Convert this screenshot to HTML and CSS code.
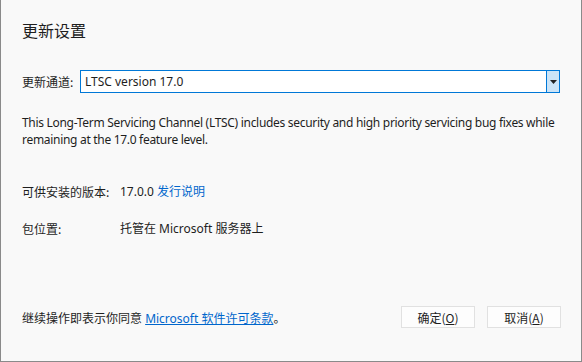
FILE: index.html
```html
<!DOCTYPE html>
<html lang="zh-CN">
<head>
<meta charset="utf-8">
<link rel="stylesheet" href="styles.css">
</head>
<body>
<div class="dialog">
  <h1 class="title">更新设置</h1>
  <div class="row channel">
    <span class="label">更新通道:</span>
    <div class="combo">
      <span class="combo-text">LTSC version 17.0</span>
      <span class="combo-btn"><svg width="7" height="4" viewBox="0 0 7 4"><path d="M0 0H7L3.5 4Z" fill="#222"/></svg></span>
    </div>
  </div>
  <p class="desc">This Long-Term Servicing Channel (LTSC) includes security and high priority servicing bug fixes while remaining at the 17.0 feature level.</p>
  <div class="row info version">
    <span class="key">可供安装的版本:</span>
    <span class="val">17.0.0 <a class="link">发行说明</a></span>
  </div>
  <div class="row info location">
    <span class="key">包位置:</span>
    <span class="val">托管在 Microsoft 服务器上</span>
  </div>
  <div class="spacer"></div>
  <div class="footer">
    <span class="agree">继续操作即表示你同意 <a class="link ul">Microsoft 软件许可条款</a>。</span>
    <div class="buttons">
      <button class="btn">确定(<u>O</u>)</button>
      <button class="btn">取消(<u>A</u>)</button>
    </div>
  </div>
</div>
</body>
</html>
```

FILE: styles.css
```css
* { box-sizing: border-box; }
html, body { margin: 0; padding: 0; }
body {
  width: 582px;
  height: 362px;
  background: #f9f9f9;
  font-family: "Noto Sans", "Noto Sans CJK SC", sans-serif;
  font-size: 12px;
  color: #1e1e1e;
}
.dialog {
  width: 582px;
  height: 362px;
  border-left: 1px solid #8a8a8a;
  border-right: 1px solid #8a8a8a;
  border-bottom: 1px solid #8a8a8a;
  padding: 18px 21px 0 21px;
  display: flex;
  flex-direction: column;
}
.title {
  margin: 0;
  font-size: 16px;
  font-weight: normal;
  line-height: 24px;
  font-family: "Noto Sans CJK SC", sans-serif;
  color: #1e1e1e;
}
.row { display: flex; align-items: center; }
.channel { margin-top: 28px; }
.label { width: 58px; font-family: "Noto Sans CJK SC", sans-serif; }
.combo {
  width: 480px;
  height: 23px;
  border: 1px solid #0078d7;
  background: #fff;
  display: flex;
  align-items: stretch;
}
.combo-text { flex: 1; padding-left: 4px; line-height: 21px; }
.combo-btn {
  width: 13px;
  background: #cce4f7;
  border-left: 1px solid #0078d7;
  display: flex;
  align-items: center;
  justify-content: center;
}
.desc {
  margin: 21px 0 0 0;
  line-height: 17px;
  width: 540px;
  letter-spacing: -0.3px;
}
.info { line-height: 16px; }
.version { margin-top: 36px; }
.location { margin-top: 21px; }
.key { width: 98px; font-family: "Noto Sans CJK SC", sans-serif; }
.link { color: #0066cc; font-family: "Noto Sans", "Noto Sans CJK SC", sans-serif; }
.ul { text-decoration: underline; }
.spacer { flex: 1; }
.footer {
  display: flex;
  align-items: center;
  justify-content: space-between;
  margin-bottom: 33px;
}
.agree { position: relative; top: 1px; }
.buttons { display: flex; gap: 12px; margin-right: -1px; }
.btn {
  width: 74px;
  height: 22px;
  border: 1px solid #e1e1e1;
  background: #fdfdfd;
  font-family: "Noto Sans CJK SC", sans-serif;
  font-size: 12px;
  color: #1e1e1e;
  padding: 0;
}
```
